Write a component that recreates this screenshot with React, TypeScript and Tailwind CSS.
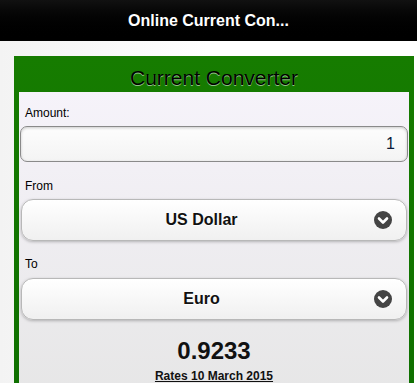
import React from "react";

function Chevron() {
  return (
    <svg width="18" height="18" viewBox="0 0 18 18">
      <circle cx="9" cy="9" r="9" fill="#444" />
      <path d="M5 7.5 L9 11.5 L13 7.5" fill="none" stroke="#fff" strokeWidth="2.6" strokeLinecap="round" strokeLinejoin="round" />
    </svg>
  );
}

function Select({ label }: { label: string }) {
  return (
    <div className="relative mx-[1px] h-[42px] rounded-[12px] border border-[#b8b8b8] bg-gradient-to-b from-[#ffffff] to-[#f0f0f0] shadow-[0_1px_3px_rgba(0,0,0,0.25)] flex items-center justify-center pl-[15px] pr-[40px]">
      <span className="text-[16px] font-bold text-[#111] [text-shadow:0_1px_0_#fff]">{label}</span>
      <span className="absolute right-[14px] top-[11px]"><Chevron /></span>
    </div>
  );
}

export default function App() {
  return (
    <div className="w-[417px] h-[383px] overflow-hidden bg-gradient-to-r from-[#f3f3f3] via-white to-white" style={{ fontFamily: '"Liberation Sans", Arial, sans-serif' }}>
      <div className="h-[41px] bg-gradient-to-b from-[#111] to-[#000] flex items-center justify-center">
        <span className="text-white font-bold text-[16px] [text-shadow:0_1px_0_#000]">Online Current Con...</span>
      </div>
      <div className="mt-[15px] ml-[14px] w-[400px] bg-gradient-to-b from-[#167c00] to-[#0e6f00] px-[5px] pb-[5px]">
        <div className="h-[36px] flex items-end justify-center pb-[2px]">
          <span className="text-[21px] leading-[24px] text-black [text-shadow:0_1px_0_rgba(255,255,255,0.55)]">Current Converter</span>
        </div>
        <div className="bg-gradient-to-b from-[#f6f3fa] to-[#e6e6e6] px-[1px] pt-[14px] pb-[20px]">
          <div className="pl-[5px] text-[12px] leading-[14px] text-black">Amount:</div>
          <div className="mt-[6px] h-[36px] rounded-[7px] border border-[#8a8a8a] bg-gradient-to-b from-[#fdfdfd] to-[#f4f4f4] shadow-[inset_0_1px_3px_rgba(0,0,0,0.2)] flex items-center justify-end pr-[12px]">
            <span className="text-[16px] text-[#0b1a3a]">1</span>
          </div>
          <div className="mt-[17px] pl-[5px] text-[12px] leading-[14px] text-black">From</div>
          <div className="mt-[6px]"><Select label="US Dollar" /></div>
          <div className="mt-[16px] pl-[5px] text-[12px] leading-[14px] text-black">To</div>
          <div className="mt-[7px]"><Select label="Euro" /></div>
          <div className="mt-[17px] text-center text-[24px] font-bold leading-[28px] text-[#111]">0.9233</div>
          <div className="mt-[4px] text-center text-[12px] font-bold underline leading-[14px] text-[#111]">Rates 10 March 2015</div>
        </div>
      </div>
    </div>
  );
}
